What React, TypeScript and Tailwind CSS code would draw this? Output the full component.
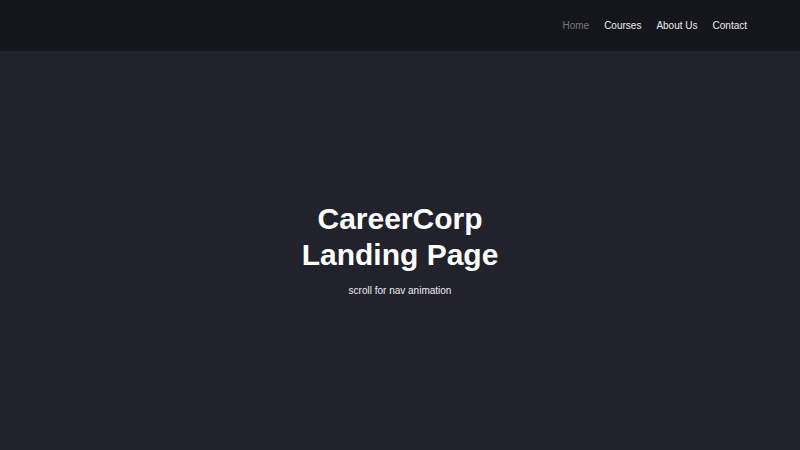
export default function App() {
  const links = ['Home', 'Courses', 'About Us', 'Contact'];

  return (
    <div className="flex h-screen flex-col bg-[#22222c] font-['Liberation_Sans',Arial,sans-serif] text-white">
      <nav className="flex h-[51px] shrink-0 items-center justify-end bg-[#15161c] pr-[53px]">
        <ul className="flex items-center gap-[15px] text-[10px] leading-[14px]">
          {links.map((link, i) => (
            <li key={link}>
              <a href="#" className={i === 0 ? 'text-[#76767c]' : 'text-[#ececee]'}>
                {link}
              </a>
            </li>
          ))}
        </ul>
      </nav>

      <main className="flex flex-1 flex-col items-center justify-center pb-[2px]">
        <h1 className="text-center text-[30px] font-bold leading-[36px]">
          CareerCorp
          <br />
          Landing Page
        </h1>
        <p className="mt-[11px] text-[10px] leading-[14px] text-[#ececee]">scroll for nav animation</p>
      </main>
    </div>
  );
}
